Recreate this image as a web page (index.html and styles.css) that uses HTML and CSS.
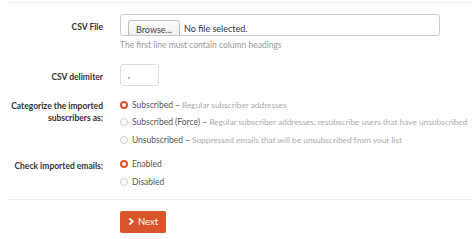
FILE: index.html
```html
<!DOCTYPE html>
<html lang="en">
<head>
    <meta charset="UTF-8">
    <title>Import subscribers</title>
    <link rel="stylesheet" href="styles.css">
</head>
<body>
    <form class="import-form">
        <div class="form-row row-file">
            <label class="row-label">CSV File</label>
            <div class="row-field">
                <div class="file-input">
                    <span class="file-btn">Browse...</span>
                    <span class="file-name">No file selected.</span>
                </div>
                <p class="help">The first line must contain column headings</p>
            </div>
        </div>

        <div class="form-row row-delim">
            <label class="row-label">CSV delimiter</label>
            <div class="row-field">
                <div class="text-input small">,</div>
            </div>
        </div>

        <div class="form-row row-status">
            <label class="row-label">Categorize the imported subscribers as:</label>
            <div class="row-field">
                <div class="radio checked"><span class="dot"></span>Subscribed –<span class="note">Regular subscriber addresses</span></div>
                <div class="radio"><span class="dot"></span>Subscribed (Force) –<span class="note">Regular subscriber addresses, resubscribe users that have unsubscribed</span></div>
                <div class="radio"><span class="dot"></span>Unsubscribed –<span class="note">Suppressed emails that will be unsubscribed from your list</span></div>
            </div>
        </div>

        <div class="form-row row-check">
            <label class="row-label">Check imported emails:</label>
            <div class="row-field">
                <div class="radio checked"><span class="dot"></span>Enabled</div>
                <div class="radio"><span class="dot"></span>Disabled</div>
            </div>
        </div>

        <div class="form-actions">
            <button type="button" class="btn-next">
                <svg width="6" height="7" viewBox="0 0 6 8"><path d="M1 0.5 L5 4 L1 7.5" fill="none" stroke="#fff" stroke-width="2"/></svg>
                Next
            </button>
        </div>
    </form>
</body>
</html>
```

FILE: styles.css
```css
* {
    margin: 0;
    padding: 0;
    box-sizing: border-box;
}

body {
    font-family: Lato, 'Noto Sans', sans-serif;
    font-size: 8.5px;
    line-height: 12px;
    color: #555;
    background: #fff;
}

.import-form {
    margin: 2px 1px 0 8px;
    border-top: 1px solid #eee;
}

.form-row {
    display: grid;
    grid-template-columns: 95px 1fr;
    column-gap: 17px;
}

.row-file {
    margin-top: 11px;
}

.row-delim {
    margin-top: 13px;
}

.row-status {
    margin-top: 10px;
}

.row-check {
    margin-top: 7px;
}

.row-label {
    text-align: right;
    font-weight: 700;
    color: #333;
    white-space: nowrap;
    padding-top: 7px;
}

.row-status .row-label {
    white-space: normal;
    padding-top: 4px;
}

.row-check .row-label {
    padding-top: 4px;
}

.file-input {
    display: flex;
    align-items: flex-start;
    width: 320px;
    height: 22px;
    border: 1px solid #ccc;
    border-radius: 3px;
    overflow: hidden;
    padding: 5px 0 0 7px;
}

.file-btn {
    height: 20px;
    width: 52px;
    padding-top: 3px;
    text-align: center;
    border: 1px solid #bbb;
    border-radius: 3px;
    background: linear-gradient(#fbfbfb, #ececec);
    color: #444;
    font-size: 9px;
}

.file-name {
    margin-left: 4px;
    padding-top: 3px;
    color: #333;
    font-size: 9px;
}

.help {
    margin-top: 3px;
    color: #999;
}

.text-input {
    height: 22px;
    border: 1px solid #ddd;
    border-radius: 3px;
    padding: 4px 7px;
    color: #333;
}

.text-input.small {
    width: 39px;
}

.radio {
    display: flex;
    align-items: center;
    height: 17.5px;
    color: #555;
    white-space: nowrap;
}

.dot {
    flex: none;
    width: 8px;
    height: 8px;
    border: 1px solid #ccc;
    border-radius: 50%;
    margin-right: 4px;
    background: #fff;
}

.radio.checked .dot {
    border: 2.5px solid #d9532b;
}

.note {
    margin-left: 2px;
    color: #aaa;
    font-size: 8.3px;
}

.form-actions {
    margin-top: 8px;
    border-top: 1px solid #eee;
    padding: 11px 0 0 112px;
}

.btn-next {
    display: flex;
    align-items: center;
    gap: 4px;
    height: 22px;
    padding: 0 8px;
    background: #d9532b;
    border: none;
    border-radius: 2px;
    color: #fff;
    font-family: inherit;
    font-size: 9.5px;
}
```
